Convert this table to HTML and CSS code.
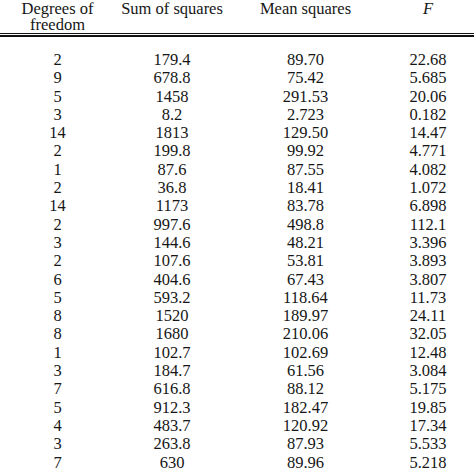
FILE: index.html
```html
<!DOCTYPE html>
<html>
<head>
<meta charset="utf-8">
<link rel="stylesheet" href="styles.css">
</head>
<body>
<table class="anova">
<colgroup>
<col class="c1"><col class="c2"><col class="c3"><col class="c4">
</colgroup>
<thead>
<tr><th>Degrees of<br>freedom</th><th>Sum of squares</th><th>Mean squares</th><th><i>F</i></th></tr>
</thead>
<tbody>
<tr><td>2</td><td>179.4</td><td>89.70</td><td>22.68</td></tr>
<tr><td>9</td><td>678.8</td><td>75.42</td><td>5.685</td></tr>
<tr><td>5</td><td>1458</td><td>291.53</td><td>20.06</td></tr>
<tr><td>3</td><td>8.2</td><td>2.723</td><td>0.182</td></tr>
<tr><td>14</td><td>1813</td><td>129.50</td><td>14.47</td></tr>
<tr><td>2</td><td>199.8</td><td>99.92</td><td>4.771</td></tr>
<tr><td>1</td><td>87.6</td><td>87.55</td><td>4.082</td></tr>
<tr><td>2</td><td>36.8</td><td>18.41</td><td>1.072</td></tr>
<tr><td>14</td><td>1173</td><td>83.78</td><td>6.898</td></tr>
<tr><td>2</td><td>997.6</td><td>498.8</td><td>112.1</td></tr>
<tr><td>3</td><td>144.6</td><td>48.21</td><td>3.396</td></tr>
<tr><td>2</td><td>107.6</td><td>53.81</td><td>3.893</td></tr>
<tr><td>6</td><td>404.6</td><td>67.43</td><td>3.807</td></tr>
<tr><td>5</td><td>593.2</td><td>118.64</td><td>11.73</td></tr>
<tr><td>8</td><td>1520</td><td>189.97</td><td>24.11</td></tr>
<tr><td>8</td><td>1680</td><td>210.06</td><td>32.05</td></tr>
<tr><td>1</td><td>102.7</td><td>102.69</td><td>12.48</td></tr>
<tr><td>3</td><td>184.7</td><td>61.56</td><td>3.084</td></tr>
<tr><td>7</td><td>616.8</td><td>88.12</td><td>5.175</td></tr>
<tr><td>5</td><td>912.3</td><td>182.47</td><td>19.85</td></tr>
<tr><td>4</td><td>483.7</td><td>120.92</td><td>17.34</td></tr>
<tr><td>3</td><td>263.8</td><td>87.93</td><td>5.533</td></tr>
<tr><td>7</td><td>630</td><td>89.96</td><td>5.218</td></tr>
</tbody>
</table>
</body>
</html>
```

FILE: styles.css
```css
html, body {
  margin: 0;
  padding: 0;
  background: #fff;
}
body {
  width: 474px;
  height: 474px;
  overflow: hidden;
  font-family: "Liberation Serif", "Times New Roman", serif;
  font-size: 16.5px;
  color: #161616;
}
.anova {
  width: 474px;
  border-collapse: separate;
  border-spacing: 0;
  table-layout: fixed;
}
.c1 { width: 115px; }
.c2 { width: 114px; }
.c3 { width: 153px; }
.c4 { width: 92px; }
.anova th {
  font-weight: normal;
  line-height: 16px;
  vertical-align: top;
  text-align: center;
  padding: 1px 0 0;
  border-bottom: 1px solid #111;
  box-shadow: 0 1px 0 0 #fff, 0 3px 0 0 #111;
  white-space: nowrap;
}
.anova td {
  text-align: center;
  padding: 0;
  line-height: 18.3px;
  white-space: nowrap;
}
.anova tbody tr:first-child td {
  padding-top: 17px;
}
```
